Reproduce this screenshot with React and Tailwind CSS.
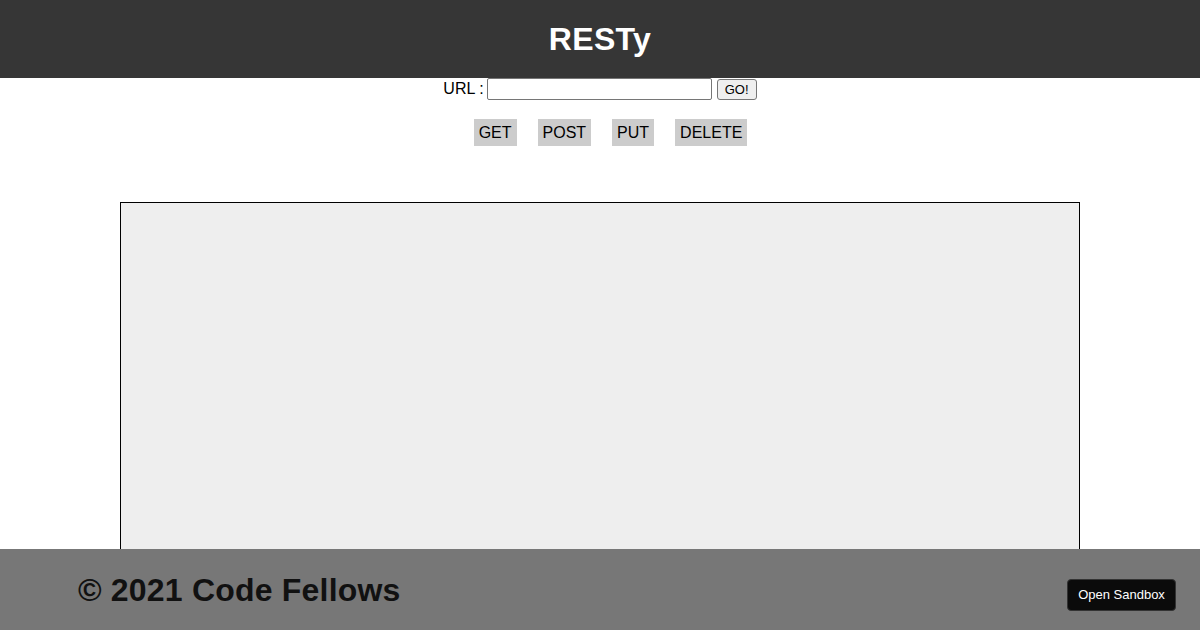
import React from "react";

const METHODS = ["GET", "POST", "PUT", "DELETE"];

export default function App() {
  return (
    <div
      className="h-[630px] w-[1200px] flex flex-col bg-white overflow-hidden relative"
      style={{ fontFamily: '"Liberation Sans", Arial, sans-serif' }}
    >
      <header className="h-[78px] shrink-0 bg-[#363636] flex items-center justify-center">
        <h1 className="text-[32px] font-bold text-white leading-none tracking-[0.3px]">RESTy</h1>
      </header>

      <main className="flex-1 overflow-hidden flex flex-col items-center">
        <form className="flex items-center justify-center h-[22px]" onSubmit={(e) => e.preventDefault()}>
          <label className="text-[16px] text-black mr-[3px]">URL :</label>
          <input
            type="text"
            className="w-[225px] h-[22px] border border-[#767676] rounded-[2px] bg-white px-1 text-[13px] outline-none"
          />
          <button
            type="submit"
            className="ml-[5px] h-[21px] w-[40px] border border-[#767676] rounded-[3px] bg-[#efefef] text-[13px] text-black leading-none"
          >
            GO!
          </button>
        </form>

        <div className="mt-[19px] flex gap-[21px] pl-[21px]">
          {METHODS.map((m) => (
            <button
              key={m}
              className="h-[27px] px-[5px] bg-[#cccccc] text-[16px] text-black leading-none"
            >
              {m}
            </button>
          ))}
        </div>

        <section className="mt-[56px] w-[960px] h-[600px] shrink-0 bg-[#eeeeee] border border-black" />
      </main>

      <footer className="h-[81px] shrink-0 bg-[#777777] flex items-center pl-[78px]">
        <h2 className="text-[32px] font-bold text-[#111111] leading-none tracking-[0.2px]">© 2021 Code Fellows</h2>
      </footer>

      <button className="absolute left-[1067px] top-[579px] w-[109px] h-[32px] rounded-[4px] bg-[#0b0b0b] border border-[#333] text-white text-[13px]">
        Open Sandbox
      </button>
    </div>
  );
}
